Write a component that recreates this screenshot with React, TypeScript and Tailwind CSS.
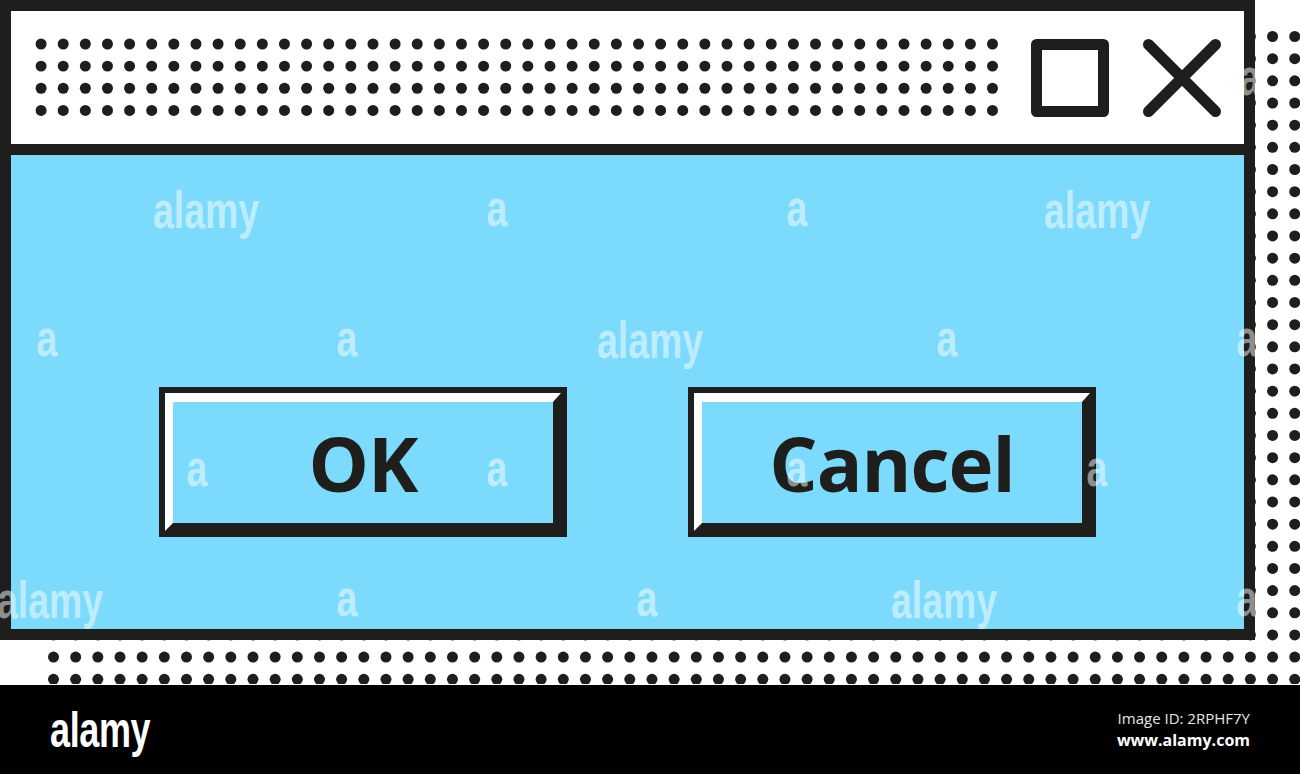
import React from "react";

const INK = "#1e1e1c";

// Grid of round dots drawn as an SVG.
function DotGrid({
  cols,
  rows,
  step,
  r,
  pad,
}: {
  cols: number;
  rows: number;
  step: number;
  r: number;
  pad: number;
}) {
  const w = pad * 2 + (cols - 1) * step;
  const h = pad * 2 + (rows - 1) * step;
  const dots: React.ReactNode[] = [];
  for (let j = 0; j < rows; j++) {
    for (let i = 0; i < cols; i++) {
      dots.push(
        <circle key={`${i}-${j}`} cx={pad + i * step} cy={pad + j * step} r={r} fill={INK} />
      );
    }
  }
  return (
    <svg width={w} height={h} viewBox={`0 0 ${w} ${h}`} className="block shrink-0">
      {dots}
    </svg>
  );
}

function MaximizeIcon() {
  return (
    <svg width="78" height="78" viewBox="0 0 78 78" className="block">
      <rect x="5.5" y="5.5" width="67" height="67" fill="none" stroke={INK} strokeWidth="11" strokeLinejoin="round" />
    </svg>
  );
}

function CloseIcon() {
  return (
    <svg width="78" height="78" viewBox="0 0 78 78" className="block">
      <path d="M5.5 5.5 L72.5 72.5 M72.5 5.5 L5.5 72.5" fill="none" stroke={INK} strokeWidth="11" strokeLinecap="round" />
    </svg>
  );
}

function BevelButton({ label }: { label: string }) {
  return (
    <div className="h-[150px] w-[408px] border-[6px] border-[#1e1e1c]">
      <div className="flex h-full w-full items-center justify-center border-[8px] border-t-[9px] border-t-white border-l-white border-r-[#1e1e1c] border-b-[#1e1e1c]">
        <span
          className="text-[76px] font-bold leading-none tracking-[-1px] text-[#1e1e1c]"
          style={{ fontFamily: '"Open Sans", "Noto Sans", sans-serif' }}
        >
          {label}
        </span>
      </div>
    </div>
  );
}

const marks: { t: string; x: number; y: number }[] = [
  { t: "a", x: 1250, y: 77 },
  { t: "alamy", x: 206, y: 210 },
  { t: "a", x: 497, y: 208 },
  { t: "a", x: 797, y: 208 },
  { t: "alamy", x: 1097, y: 210 },
  { t: "a", x: 47, y: 338 },
  { t: "a", x: 347, y: 338 },
  { t: "alamy", x: 650, y: 340 },
  { t: "a", x: 947, y: 338 },
  { t: "a", x: 1247, y: 338 },
  { t: "a", x: 197, y: 468 },
  { t: "a", x: 497, y: 468 },
  { t: "a", x: 797, y: 468 },
  { t: "a", x: 1097, y: 468 },
  { t: "alamy", x: 50, y: 600 },
  { t: "a", x: 347, y: 598 },
  { t: "a", x: 647, y: 598 },
  { t: "alamy", x: 944, y: 600 },
  { t: "a", x: 1247, y: 598 },
];

const condensed = { fontFamily: '"Liberation Sans", Arial, sans-serif' };

export default function App() {
  return (
    <div className="relative h-[774px] w-[1300px] overflow-hidden bg-white">
      {/* dotted drop shadow behind the window */}
      <div className="absolute left-[47.5px] top-[30.5px]">
        <DotGrid cols={57} rows={30} step={22.165} r={5.5} pad={5.5} />
      </div>

      <div className="relative h-[685px]">
        {/* window */}
        <div className="flex h-[640px] w-[1255px] flex-col border-[11px] border-[#1e1e1c]">
          {/* title bar */}
          <div className="flex h-[144px] shrink-0 items-center border-b-[11px] border-[#1e1e1c] bg-white pl-[24px] pr-[23px]">
            <DotGrid cols={44} rows={4} step={22.13} r={5.5} pad={6} />
            <div className="ml-auto flex items-center gap-[34px]">
              <MaximizeIcon />
              <CloseIcon />
            </div>
          </div>
          {/* body */}
          <div className="flex flex-1 items-start justify-center gap-[121px] bg-[#7cdafc] pt-[232px]">
            <BevelButton label="OK" />
            <BevelButton label="Cancel" />
          </div>
        </div>
      </div>

      {/* footer */}
      <div className="relative flex h-[89px] items-center justify-between bg-black pl-[50px] pr-[50px]">
        <span
          className="origin-left scale-x-[0.72] text-[50px] font-bold leading-none tracking-[-0.5px] text-white"
          style={condensed}
        >
          alamy
        </span>
        <div
          className="flex flex-col items-end text-white"
          style={{ fontFamily: '"Open Sans", "Noto Sans", sans-serif' }}
        >
          <span className="text-[15px] leading-[20px] text-[#e6e6e6]">Image ID: 2RPHF7Y</span>
          <span className="text-[16px] font-bold leading-[24px]">www.alamy.com</span>
        </div>
      </div>

      {/* watermark marks */}
      {marks.map((m, i) => (
        <span
          key={i}
          className="pointer-events-none absolute -translate-x-1/2 -translate-y-1/2 scale-x-[0.72] text-[52px] font-bold leading-none text-white/50"
          style={{ left: m.x, top: m.y, ...condensed }}
        >
          {m.t}
        </span>
      ))}
    </div>
  );
}
